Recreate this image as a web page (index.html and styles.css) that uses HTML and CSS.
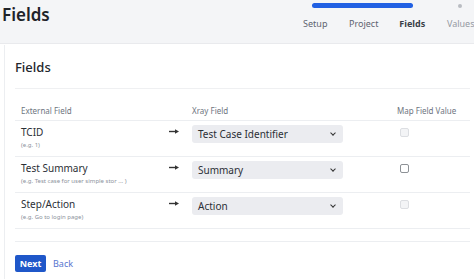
FILE: index.html
```html
<!DOCTYPE html>
<html lang="en">
<head>
    <meta charset="UTF-8">
    <title>Fields</title>
    <link rel="stylesheet" href="styles.css">
</head>
<body>
    <header class="topbar">
        <h1 class="page-title">Fields</h1>
        <nav class="steps">
            <div class="progress">
                <div class="progress-fill"></div>
                <div class="progress-dot"></div>
            </div>
            <div class="step-tabs">
                <span class="step">Setup</span>
                <span class="step">Project</span>
                <span class="step active">Fields</span>
                <span class="step upcoming">Values</span>
            </div>
        </nav>
    </header>

    <main class="card">
        <h2 class="card-title">Fields</h2>

        <div class="mapping">
            <div class="cell head">External Field</div>
            <div class="cell head"></div>
            <div class="cell head">Xray Field</div>
            <div class="cell head">Map Field Value</div>

            <div class="cell">
                <div class="field-name">TCID</div>
                <div class="field-hint">(e.g. 1)</div>
            </div>
            <div class="cell"><svg class="arrow" width="10" height="5" viewBox="0 0 10 5"><path d="M0 2.5h7" stroke="#333" stroke-width="1.4"/><path d="M6 0.3l4 2.2-4 2.2z" fill="#333"/></svg></div>
            <div class="cell">
                <div class="select">Test Case Identifier<span class="chev"></span></div>
            </div>
            <div class="cell"><span class="check disabled"></span></div>

            <div class="cell">
                <div class="field-name">Test Summary</div>
                <div class="field-hint">(e.g. Test case for user simple stor ... )</div>
            </div>
            <div class="cell"><svg class="arrow" width="10" height="5" viewBox="0 0 10 5"><path d="M0 2.5h7" stroke="#333" stroke-width="1.4"/><path d="M6 0.3l4 2.2-4 2.2z" fill="#333"/></svg></div>
            <div class="cell">
                <div class="select">Summary<span class="chev"></span></div>
            </div>
            <div class="cell"><span class="check"></span></div>

            <div class="cell">
                <div class="field-name">Step/Action</div>
                <div class="field-hint">(e.g. Go to login page)</div>
            </div>
            <div class="cell"><svg class="arrow" width="10" height="5" viewBox="0 0 10 5"><path d="M0 2.5h7" stroke="#333" stroke-width="1.4"/><path d="M6 0.3l4 2.2-4 2.2z" fill="#333"/></svg></div>
            <div class="cell">
                <div class="select">Action<span class="chev"></span></div>
            </div>
            <div class="cell"><span class="check disabled"></span></div>
        </div>

        <div class="actions">
            <button class="btn-primary">Next</button>
            <a class="link" href="#">Back</a>
        </div>
    </main>
</body>
</html>
```

FILE: styles.css
```css
body {
    margin: 0;
    font-family: "Noto Sans", "Open Sans", sans-serif;
    color: #2b2f36;
    background: #fff;
    overflow: hidden;
}
.topbar {
    display: flex;
    justify-content: space-between;
    height: 43px;
    background: #f4f5f7;
    border-bottom: 1px solid #e9eaed;
    overflow: hidden;
}
.page-title {
    margin: 3px 0 0 2px;
    font-size: 17px;
    font-weight: 600;
    color: #1f2329;
}
.steps {
    width: 183px;
    flex-shrink: 0;
}
.progress {
    display: flex;
    align-items: center;
    height: 5px;
    margin-top: 3px;
    padding-left: 21px;
}
.progress-fill {
    width: 101px;
    height: 5px;
    border-radius: 3px;
    background: #2160e3;
}
.progress-dot {
    width: 4px;
    height: 4px;
    margin-left: 45px;
    border-radius: 50%;
    background: #b9bcc2;
}
.step-tabs {
    display: flex;
    margin-top: 9px;
}
.step {
    width: 48.5px;
    flex-shrink: 0;
    text-align: center;
    font-size: 9px;
    color: #5e6470;
}
.step.active {
    font-weight: 700;
    color: #3a3f48;
}
.step.upcoming {
    color: #959aa3;
}
.card {
    margin: 1px 0 0 4px;
    padding: 1px 4px 0 10px;
    border-left: 1px solid #eceef1;
    height: 240px;
}
.card-title {
    margin: 12px 0 0 0;
    padding-bottom: 12px;
    font-size: 13px;
    font-weight: 500;
    color: #22262c;
    border-bottom: 1px solid #eff0f2;
}
.mapping {
    display: grid;
    grid-template-columns: 148px 23px 205px 1fr;
    margin-top: 14px;
    border-bottom: 1px solid #eceef1;
}
.cell {
    padding: 4px 6px 5px;
    border-bottom: 1px solid #eceef1;
}
.mapping > .cell:nth-last-child(-n+4) {
    border-bottom: none;
}
.cell.head {
    font-size: 8px;
    color: #6e7580;
    padding: 3px 6px 4px;
    line-height: 10px;
}
.field-name {
    font-size: 10px;
    line-height: 14px;
    color: #2b2f36;
}
.field-hint {
    font-size: 6px;
    line-height: 12px;
    color: #8c929c;
}
.arrow {
    display: block;
    margin: 4px 0 0 0;
}
.select {
    position: relative;
    width: 145px;
    height: 18px;
    padding-left: 6px;
    line-height: 18px;
    font-size: 10px;
    color: #2b2f36;
    background: #ebecf0;
    border-radius: 3px;
}
.chev {
    position: absolute;
    right: 8px;
    top: 6px;
    width: 3px;
    height: 3px;
    border-right: 1.3px solid #333;
    border-bottom: 1.3px solid #333;
    transform: rotate(45deg);
}
.check {
    display: block;
    width: 7px;
    height: 7px;
    margin: 3px 0 0 3px;
    border: 1px solid #8d9196;
    border-radius: 2px;
}
.check.disabled {
    border-color: #dcdee2;
    background: #f3f4f6;
}
.actions {
    display: flex;
    align-items: center;
    gap: 7px;
    margin-top: 12px;
    padding-top: 13px;
    border-top: 1px solid #eceef1;
}
.btn-primary {
    width: 31px;
    height: 17px;
    padding: 0;
    border: none;
    border-radius: 2px;
    background: #1f57c9;
    color: #fff;
    font-family: inherit;
    font-size: 9px;
    font-weight: 700;
}
.link {
    font-size: 9px;
    color: #5674cf;
    text-decoration: none;
}
```
